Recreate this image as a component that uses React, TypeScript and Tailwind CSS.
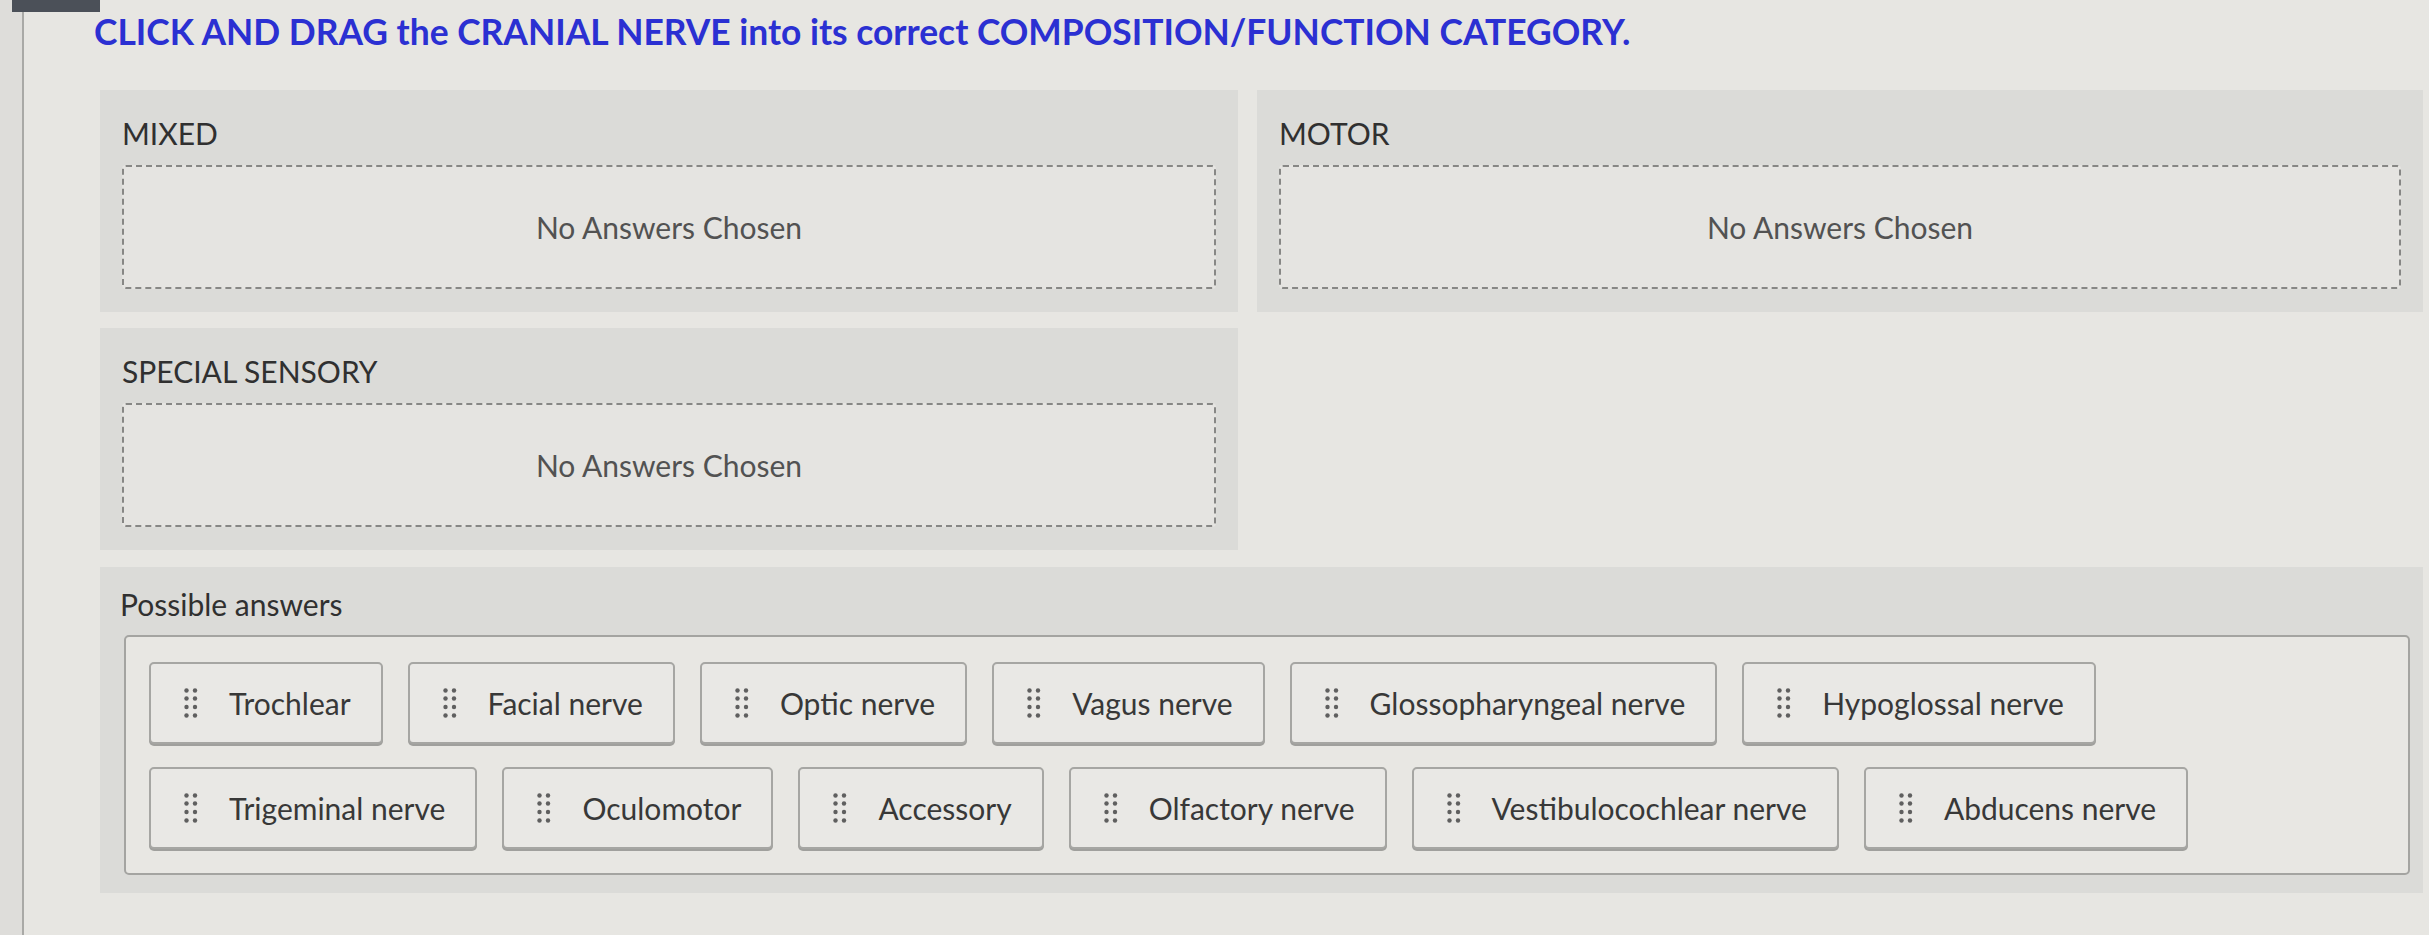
import type { ReactNode } from "react";

const rowOne = ["Trochlear", "Facial nerve", "Optic nerve", "Vagus nerve", "Glossopharyngeal nerve", "Hypoglossal nerve"];
const rowTwo = ["Trigeminal nerve", "Oculomotor", "Accessory", "Olfactory nerve", "Vestibulocochlear nerve", "Abducens nerve"];

function Grip() {
  return (
    <svg width="14" height="30" viewBox="0 0 14 30" className="shrink-0">
      {[2.5, 10.5, 19, 27.5].map((y) =>
        [2.5, 11].map((x) => <circle key={`${x}-${y}`} cx={x} cy={y} r="2.2" fill="#5f5f5f" />)
      )}
    </svg>
  );
}

function Chip({ label }: { label: string }) {
  return (
    <div className="flex h-[82px] items-center gap-[31px] rounded-[5px] border-2 border-[#a6a6a3] bg-[#e9e8e5] pl-[33px] pr-[30px] shadow-[0_2px_0_#a0a09d]">
      <Grip />
      <span className="text-[30px] text-[#383838]">{label}</span>
    </div>
  );
}

function Category({ title }: { title: string }) {
  return (
    <div className="bg-[#dbdbd8] px-[22px] pb-[23px] pt-[25px]">
      <div className="h-[36px] text-[30px] leading-[36px] text-[#303030]">{title}</div>
      <div className="mt-[14px] flex h-[124px] items-center justify-center rounded-[4px] border-2 border-dashed border-[#878785] bg-[#e5e4e1]">
        <span className="text-[30px] text-[#525252]">No Answers Chosen</span>
      </div>
    </div>
  );
}

function Panel({ children }: { children: ReactNode }) {
  return <div className="bg-[#dbdbd8] px-[20px] pb-[18px] pt-[19px]">{children}</div>;
}

export default function App() {
  return (
    <div className="relative flex min-h-[935px] bg-[#e7e6e2] font-[Lato,sans-serif]">
      <div className="absolute left-[12px] top-0 h-[12px] w-[88px] bg-[#4b5058]" />
      <div className="w-[24px] shrink-0 border-r-2 border-[#a9a9a6] bg-[#deddda]" />

      <div className="flex-1 pr-[6px]">
        <h1 className="pl-[70px] pt-[10px] text-[35.4px] font-bold leading-[43px] text-[#2b30d2]">
          CLICK AND DRAG the CRANIAL NERVE into its correct COMPOSITION/FUNCTION CATEGORY.
        </h1>

        <div className="ml-[76px] mt-[37px]">
          <div className="grid grid-cols-[1138px_1fr] gap-x-[19px] gap-y-[16px]">
            <Category title="MIXED" />
            <Category title="MOTOR" />
            <Category title="SPECIAL SENSORY" />
          </div>

          <div className="mt-[17px]">
            <Panel>
              <div className="h-[36px] text-[30px] leading-[36px] text-[#303030]">Possible answers</div>
              <div className="ml-[4px] mr-[-7px] mt-[13px] rounded-[5px] border-2 border-[#a4a4a1] bg-[#e8e7e3] px-[23px] pb-[24px] pt-[25px]">
                <div className="flex flex-col gap-[23px]">
                  <div className="flex gap-[25px]">
                    {rowOne.map((label) => (
                      <Chip key={label} label={label} />
                    ))}
                  </div>
                  <div className="flex gap-[25px]">
                    {rowTwo.map((label) => (
                      <Chip key={label} label={label} />
                    ))}
                  </div>
                </div>
              </div>
            </Panel>
          </div>
        </div>
      </div>
    </div>
  );
}
